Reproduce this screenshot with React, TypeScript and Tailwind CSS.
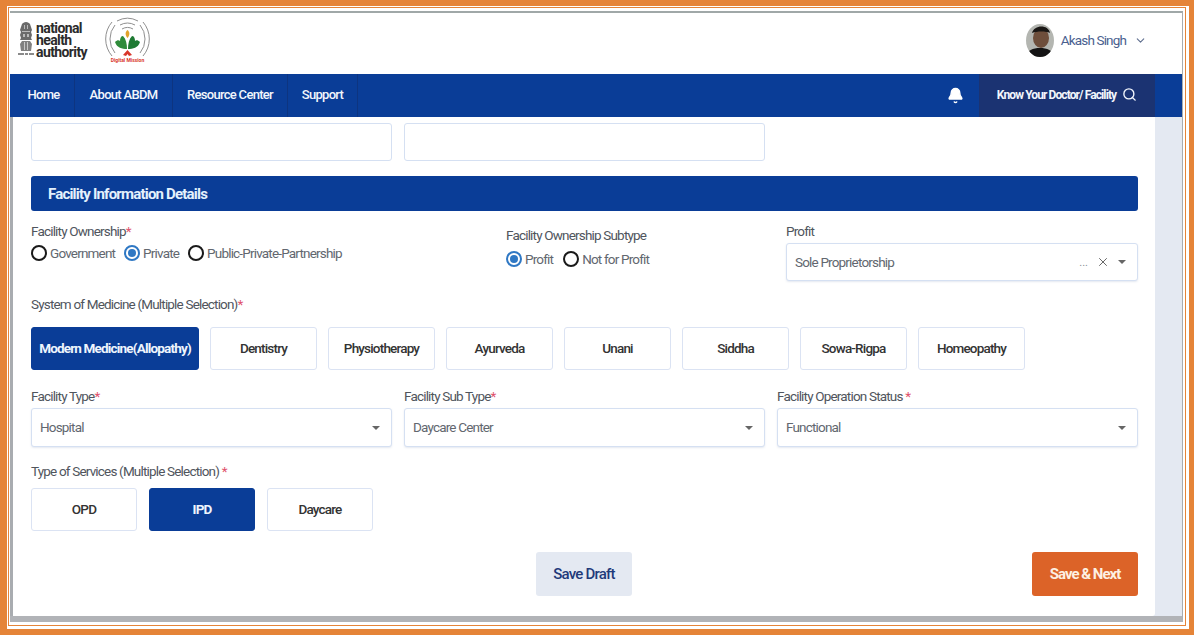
import { Bell, ChevronDown, Search, X } from "lucide-react"

const labelCls = "text-[13.5px] leading-[16px] text-[#50555d] tracking-[-0.82px] whitespace-nowrap"

function Req() {
  return <span className="text-[#e0516b]">*</span>
}

function Radio({ label, checked }: { label: string; checked?: boolean }) {
  return (
    <div className="flex items-center gap-[3px]">
      {checked ? (
        <span className="flex h-[16px] w-[16px] items-center justify-center rounded-full border-2 border-[#2f78c4]">
          <span className="h-[8px] w-[8px] rounded-full bg-[#2f78c4]" />
        </span>
      ) : (
        <span className="h-[16px] w-[16px] rounded-full border-2 border-[#1a1a1a]" />
      )}
      <span className="whitespace-nowrap text-[13.5px] leading-[16px] text-[#62676f] tracking-[-0.82px]">{label}</span>
    </div>
  )
}

function Select({ value, clear }: { value: string; clear?: boolean }) {
  return (
    <div
      className={`flex items-center rounded-[3px] border border-[#d5e0f2] bg-white pl-[8px] pr-[11px] shadow-[0_1px_2px_rgba(120,140,180,0.2)] ${
        clear ? "h-[38px]" : "h-[39px]"
      }`}
    >
      <span className="flex-1 text-[13.5px] text-[#62676f] tracking-[-0.82px]">{value}</span>
      {clear && (
        <>
          <span className="mr-[8px] mt-[2px] text-[11px] text-[#8a8f98]">...</span>
          <X className="mr-[8px] h-[14px] w-[14px] text-[#666]" strokeWidth={1.7} />
        </>
      )}
      <span className="h-0 w-0 border-x-[4px] border-t-[4px] border-x-transparent border-t-[#666]" />
    </div>
  )
}

function Choice({ label, active, width }: { label: string; active?: boolean; width: string }) {
  return (
    <div
      className={`flex h-[43px] items-center justify-center whitespace-nowrap rounded-[3px] border text-[13.5px] tracking-[-0.82px] ${width} ${
        active
          ? "border-[#0a3d97] bg-[#0a3d97] font-bold text-[#eef5fd]"
          : "border-[#dbe3f3] bg-white font-medium text-[#333]"
      }`}
    >
      {label}
    </div>
  )
}

function Emblem() {
  return (
    <svg width="16" height="36" viewBox="0 0 16 36" className="shrink-0">
      <path d="M8 0c2 0 3 1 4 2l1 3 1 3-1 2 1 3-1 3 1 2H2l1-2-1-3 1-3-1-2 1-3 1-3c1-1 2-2 4-2z" fill="#6a6a6a" />
      <path d="M6 3h1v4H6zM9 3h1v4H9zM4 9h8v1H4zM5 12h2v3H5zM9 12h2v3H9z" fill="#b9b9b9" />
      <path d="M4 19h8l2 3-1 7H3l-1-7z" fill="#808080" />
      <path d="M6 20h1v8H6zM9 20h1v8H9z" fill="#c8c8c8" />
      <rect x="0" y="31" width="6" height="2" fill="#8a8a8a" />
      <rect x="7" y="31" width="3" height="2" fill="#8a8a8a" />
      <rect x="11" y="31" width="5" height="2" fill="#8a8a8a" />
    </svg>
  )
}

function AbdmLogo() {
  return (
    <svg width="45" height="47" viewBox="0 0 45 47" className="shrink-0">
      <g fill="none" stroke="#8f8f8f" strokeWidth="1">
        <path d="M12 4A22 22 0 0 1 33 4" />
        <path d="M15 8A16 16 0 0 1 30 8" />
        <path d="M17 12A11 11 0 0 1 28 12" />
        <path d="M7 5A26 26 0 0 0 7 39" />
        <path d="M10 8A22 22 0 0 0 10 36" />
        <path d="M38 5A26 26 0 0 1 38 39" />
        <path d="M35 8A22 22 0 0 1 35 36" />
      </g>
      <path d="M22.500 13c2.500 2 2.500 5 0 8-2.500-3-2.500-6 0-8z" fill="#e2a32a" />
      <path d="M22 32c-5 0-10-1-12-7 2-2 4-2 5-1 0-3 1-5 3-5 3 3 4 8 4 13z" fill="#2e8b3a" />
      <path d="M23 32c5 0 10-1 12-7-2-2-4-2-5-1 0-3-1-5-3-5-3 3-4 8-4 13z" fill="#1f7a33" />
      <path d="M18 38l4.500-5 4.500 5-3 1-1.500-2-1.500 2z" fill="#d9362b" />
      <text x="22.500" y="45" textAnchor="middle" fontSize="5" fontWeight="700" fill="#d9362b">Digital Mission</text>
    </svg>
  )
}

function Avatar() {
  return (
    <svg width="28" height="33" viewBox="0 0 28 33" className="shrink-0">
      <defs>
        <clipPath id="av">
          <ellipse cx="14" cy="16.500" rx="14" ry="16.500" />
        </clipPath>
      </defs>
      <g clipPath="url(#av)">
        <rect width="28" height="33" fill="#b4b6b1" />
        <ellipse cx="15" cy="14" rx="8" ry="10" fill="#6e4e3b" />
        <path d="M6 9c2-8 16-9 18 0-4-2-13-2-18 0z" fill="#1a1715" />
        <path d="M0 33c1-7 7-9 14-9s13 2 14 9z" fill="#141414" />
      </g>
    </svg>
  )
}

export default function App() {
  return (
    <div className="h-[635px] w-[1194px] overflow-hidden border-b-[6px] border-l-[7px] border-r-[5px] border-t-[6px] border-[#e58438] bg-white pb-[3px] pl-[1px] pr-[3px] pt-[1px] font-['Roboto',sans-serif]">
      <div className="h-full border border-[#e58438] bg-white pb-[3px] pl-[1px] pr-[2px] pt-[3px]">
        <div className="flex h-full flex-col border-b-[6px] border-r border-t-2 border-b-[#b1b3b7] border-r-[#a9acb0] border-t-[#a0a8a8] bg-[#e4e9f2]">
          {/* Header */}
          <div className="flex h-[61px] shrink-0 items-center bg-white pb-[7px] pl-[8px] pr-[35px]">
            <Emblem />
            <div className="ml-[2px] text-[14px] font-bold leading-[12px] tracking-[-0.6px] text-[#2b2b2b]">
              <div>national</div>
              <div>health</div>
              <div>authority</div>
            </div>
            <div className="ml-[18px]">
              <AbdmLogo />
            </div>
            <div className="ml-auto flex items-center">
              <Avatar />
              <span className="ml-[7px] text-[13.5px] tracking-[-0.85px] text-[#4a5f8f]">Akash Singh</span>
              <ChevronDown className="ml-[8px] h-[13px] w-[13px] text-[#5f6f8f]" strokeWidth={2} />
            </div>
          </div>

          {/* Nav */}
          <div className="flex h-[43px] shrink-0 items-stretch bg-[#0a3d97] text-[13px] font-medium tracking-[-0.7px] text-[#f2f6fc]">
            <div className="flex w-[65px] items-center justify-center border-r border-[#0d3480] pb-[2px] pl-[3px]">Home</div>
            <div className="flex w-[98px] items-center justify-center border-r border-[#0d3480] pb-[2px]">About ABDM</div>
            <div className="flex w-[115px] items-center justify-center border-r border-[#0d3480] pb-[2px]">Resource Center</div>
            <div className="flex w-[70px] items-center justify-center border-r border-[#0d3480] pb-[2px]">Support</div>
            <div className="ml-auto flex items-center pr-[15px]">
              <Bell className="h-[17px] w-[17px] fill-white text-white" />
            </div>
            <div className="mr-[27px] flex w-[176px] items-center justify-center gap-[6px] bg-[#1b3372] pb-[2px] text-[12px] font-bold tracking-[-0.9px]">
              Know Your Doctor/ Facility
              <Search className="h-[15px] w-[15px]" strokeWidth={2.2} />
            </div>
          </div>

          {/* Card */}
          <div className="w-[1145px] flex-1 rounded-br-[3px] border-l-[3px] border-l-[#a9acb0] bg-white pl-[18px] pt-[6px]">
            <div className="grid w-[1107px] grid-cols-3 gap-x-[12px]">
              <div className="h-[38px] rounded-[3px] border border-[#d5e0f2]" />
              <div className="h-[38px] rounded-[3px] border border-[#d5e0f2]" />
            </div>

            <div className="mt-[15px] flex h-[35px] w-[1107px] items-center rounded-[3px] bg-[#0a3d97] pl-[17px] pt-[1px] text-[15px] font-bold tracking-[-0.8px] text-[#e4f1fc]">
              Facility Information Details
            </div>

            <div className="mt-[12px] grid h-[70px] w-[1107px] grid-cols-[475px_280px_352px]">
              <div>
                <div className={labelCls}>
                  Facility Ownership
                  <Req />
                </div>
                <div className="mt-[6px] flex gap-[9px]">
                  <Radio label="Government" />
                  <Radio label="Private" checked />
                  <Radio label="Public-Private-Partnership" />
                </div>
              </div>
              <div className="pt-[4px]">
                <div className={labelCls}>Facility Ownership Subtype</div>
                <div className="mt-[8px] flex gap-[10px]">
                  <Radio label="Profit" checked />
                  <Radio label="Not for Profit" />
                </div>
              </div>
              <div>
                <div className={labelCls}>Profit</div>
                <div className="mt-[4px]">
                  <Select value="Sole Proprietorship" clear />
                </div>
              </div>
            </div>

            <div className={`mt-[3px] ${labelCls}`}>
              System of Medicine (Multiple Selection)
              <Req />
            </div>
            <div className="mt-[15px] flex gap-[11px]">
              <Choice label="Modern Medicine(Allopathy)" active width="w-[168px]" />
              <Choice label="Dentistry" width="w-[107px]" />
              <Choice label="Physiotherapy" width="w-[107px]" />
              <Choice label="Ayurveda" width="w-[107px]" />
              <Choice label="Unani" width="w-[107px]" />
              <Choice label="Siddha" width="w-[107px]" />
              <Choice label="Sowa-Rigpa" width="w-[107px]" />
              <Choice label="Homeopathy" width="w-[107px]" />
            </div>

            <div className="mt-[18px] grid w-[1107px] grid-cols-3 gap-x-[12px]">
              <div>
                <div className={labelCls}>
                  Facility Type
                  <Req />
                </div>
                <div className="mt-[4px]">
                  <Select value="Hospital" />
                </div>
              </div>
              <div>
                <div className={labelCls}>
                  Facility Sub Type
                  <Req />
                </div>
                <div className="mt-[4px]">
                  <Select value="Daycare Center" />
                </div>
              </div>
              <div>
                <div className={labelCls}>
                  Facility Operation Status <Req />
                </div>
                <div className="mt-[4px]">
                  <Select value="Functional" />
                </div>
              </div>
            </div>

            <div className={`mt-[16px] ${labelCls}`}>
              Type of Services (Multiple Selection) <Req />
            </div>
            <div className="mt-[9px] flex gap-[12px]">
              <Choice label="OPD" width="w-[106px]" />
              <Choice label="IPD" active width="w-[106px]" />
              <Choice label="Daycare" width="w-[106px]" />
            </div>

            <div className="mt-[21px] flex h-[44px] w-[1107px] items-stretch">
              <div className="ml-[505px] flex w-[96px] items-center justify-center rounded-[3px] bg-[#e4e9f2] text-[15px] font-medium tracking-[-0.8px] text-[#1f3a7a]">
                Save Draft
              </div>
              <div className="ml-auto flex w-[106px] items-center justify-center rounded-[3px] bg-[#dc6328] text-[15px] font-bold tracking-[-1px] text-[#fdf0e2]">
                Save &amp; Next
              </div>
            </div>
          </div>
        </div>
      </div>
    </div>
  )
}
